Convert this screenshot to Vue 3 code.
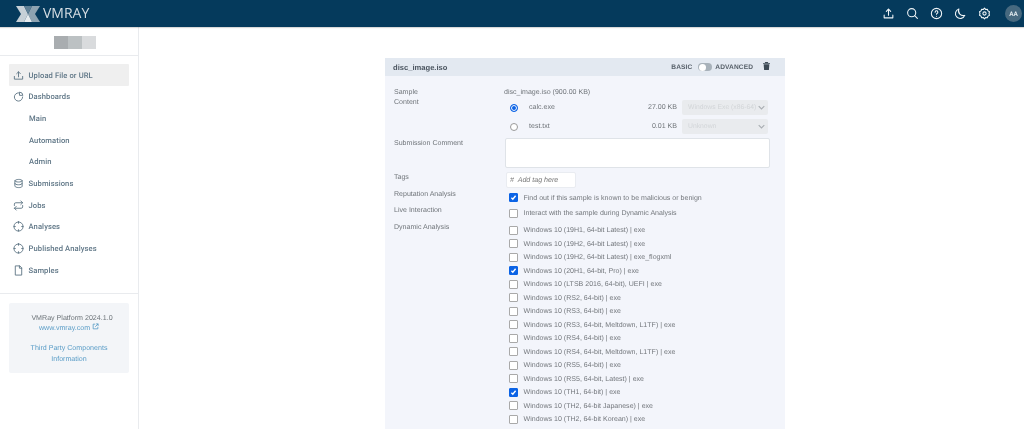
<template>
  <div class="app">
    <header class="topbar">
      <div class="logo">
        <svg width="24" height="16" viewBox="0 0 24 16">
          <path d="M0 0h8l4 8-4 8H0l5-8z" fill="#c6d0d7" />
          <path d="M24 0h-8l-4 8 4 8h8l-5-8z" fill="#8ea3b1" />
          <path d="M8 0h8l-4 8z" fill="#5f8096" />
          <path d="M8 16h8l-4-8z" fill="#e6ebee" />
        </svg>
        <span class="logo-text">VMRAY</span>
      </div>
      <div class="top-icons">
        <svg v-for="i in topIcons" :key="i.name" width="13" height="13" viewBox="0 0 24 24" fill="none" stroke="#eef3f6" stroke-width="2" stroke-linecap="round" stroke-linejoin="round">
          <path v-for="d in i.paths" :key="d" :d="d" />
        </svg>
        <span class="avatar">AA</span>
      </div>
    </header>

    <div class="body">
      <aside class="sidebar">
        <div class="org">
          <span class="swatch s1"></span><span class="swatch s2"></span><span class="swatch s3"></span>
        </div>
        <nav class="nav">
          <a v-for="item in nav" :key="item.label" class="nav-item" :class="{ active: item.active, sub: item.sub }">
            <svg v-if="item.paths" width="11" height="11" viewBox="0 0 24 24" fill="none" stroke="#5f7686" stroke-width="2" stroke-linecap="round" stroke-linejoin="round">
              <path v-for="d in item.paths" :key="d" :d="d" />
            </svg>
            <span>{{ item.label }}</span>
          </a>
        </nav>
        <div class="about-wrap">
          <div class="about">
            <div class="version">VMRay Platform 2024.1.0</div>
            <div class="link site">
              www.vmray.com
              <svg width="7" height="7" viewBox="0 0 24 24" fill="none" stroke="#4f97c4" stroke-width="2.6">
                <path d="M20 13v7H4V4h7M14 3h7v7M21 3l-10 10" />
              </svg>
            </div>
            <div class="link third">Third Party Components<br />Information</div>
          </div>
        </div>
      </aside>

      <main class="main">
        <section class="panel">
          <div class="panel-head">
            <span class="file-title">disc_image.iso</span>
            <div class="mode">
              <span>BASIC</span>
              <span class="toggle"><span class="knob"></span></span>
              <span>ADVANCED</span>
              <svg class="trash" width="7" height="8" viewBox="0 0 16 18">
                <path d="M5 0h6l1 2h4v2H0V2h4zM1.500 5h13l-1 13h-11z" fill="#3d4a55" />
              </svg>
            </div>
          </div>

          <div class="form">
            <div class="row sample">
              <div class="label">Sample<br />Content</div>
              <div class="field">
                <div class="filename">disc_image.iso (900.00 KB)</div>
                <div v-for="f in files" :key="f.name" class="file-row">
                  <span class="radio" :class="{ on: f.on }"></span>
                  <span class="file-name">{{ f.name }}</span>
                  <span class="file-size">{{ f.size }}</span>
                  <span class="select">
                    <span class="select-text">{{ f.type }}</span>
                    <svg width="7" height="5" viewBox="0 0 10 6" fill="none" stroke="#a9aeb3" stroke-width="1.600"><path d="M1 1l4 4 4-4" /></svg>
                  </span>
                </div>
              </div>
            </div>

            <div class="row comment">
              <div class="label">Submission Comment</div>
              <div class="field"><div class="textarea"></div></div>
            </div>

            <div class="row tags">
              <div class="label">Tags</div>
              <div class="field"><div class="tag-input"><span class="hash">#</span> Add tag here</div></div>
            </div>

            <div class="row single">
              <div class="label">Reputation Analysis</div>
              <div class="field">
                <label class="check"><span class="box on"><svg width="7" height="7" viewBox="0 0 10 10" fill="none" stroke="#fff" stroke-width="2"><path d="M2 5.500l2 2 4-5" /></svg></span><span class="check-text">Find out if this sample is known to be malicious or benign</span></label>
              </div>
            </div>

            <div class="row single">
              <div class="label">Live Interaction</div>
              <div class="field">
                <label class="check"><span class="box"></span><span class="check-text">Interact with the sample during Dynamic Analysis</span></label>
              </div>
            </div>

            <div class="row dynamic">
              <div class="label">Dynamic Analysis</div>
              <div class="field vm-list">
                <label v-for="vm in vms" :key="vm.name" class="check">
                  <span class="box" :class="{ on: vm.on }">
                    <svg v-if="vm.on" width="7" height="7" viewBox="0 0 10 10" fill="none" stroke="#fff" stroke-width="2"><path d="M2 5.500l2 2 4-5" /></svg>
                  </span>
                  <span class="check-text">{{ vm.name }}</span>
                </label>
              </div>
            </div>
          </div>
        </section>
      </main>
    </div>
  </div>
</template>

<script setup>
const topIcons = [
  { name: 'upload', paths: ['M12 15V4', 'M8 8l4-4 4 4', 'M4 15v5h16v-5'] },
  { name: 'search', paths: ['M10.500 3a7.500 7.500 0 1 0 0 15 7.500 7.500 0 0 0 0-15z', 'M16 16l5 5'] },
  { name: 'help', paths: ['M12 2.500a9.500 9.500 0 1 0 0 19 9.500 9.500 0 0 0 0-19z', 'M9.500 9.500a2.500 2.500 0 1 1 3.500 2.300c-.7.4-1 .9-1 1.700', 'M12 17v.01'] },
  { name: 'moon', paths: ['M20 15.500A9 9 0 0 1 9 3.500a9 9 0 1 0 11 12z'] },
  { name: 'settings', paths: ['M12 9a3 3 0 1 0 0 6 3 3 0 0 0 0-6z', 'M12 2l2 2.500 3.200-.4 1.200 3 2.800 1.600-.8 3.300.8 3.300-2.800 1.600-1.200 3-3.200-.4L12 22l-2-2.500-3.200.4-1.200-3-2.800-1.600.8-3.300-.8-3.300 2.800-1.600 1.200-3 3.200.4z'] },
]

const target = ['M12 2a10 10 0 1 0 0 20 10 10 0 0 0 0-20z', 'M12 2v3', 'M12 19v3', 'M2 12h3', 'M19 12h3']

const nav = [
  { label: 'Upload File or URL', active: true, paths: ['M12 15V4', 'M8 8l4-4 4 4', 'M3 14v6h18v-6'] },
  { label: 'Dashboards', paths: ['M12 4a9 9 0 1 0 9 9', 'M15 2.500a7 7 0 0 1 6.500 7H15z'] },
  { label: 'Main', sub: true },
  { label: 'Automation', sub: true },
  { label: 'Admin', sub: true },
  { label: 'Submissions', paths: ['M4 6c0-4 16-4 16 0v12c0 4-16 4-16 0z', 'M4 6c0 4 16 4 16 0', 'M4 12c0 4 16 4 16 0'] },
  { label: 'Jobs', paths: ['M17 2l4 4-4 4', 'M3 12V9a3 3 0 0 1 3-3h15', 'M7 22l-4-4 4-4', 'M21 12v3a3 3 0 0 1-3 3H3'] },
  { label: 'Analyses', paths: target },
  { label: 'Published Analyses', paths: target },
  { label: 'Samples', paths: ['M14 2H5v20h14V7z', 'M14 2v5h5'] },
]

const files = [
  { name: 'calc.exe', size: '27.00 KB', type: 'Windows Exe (x86-64)', on: true },
  { name: 'test.txt', size: '0.01 KB', type: 'Unknown', on: false },
]

const vms = [
  { name: 'Windows 10 (19H1, 64-bit Latest) | exe' },
  { name: 'Windows 10 (19H2, 64-bit Latest) | exe' },
  { name: 'Windows 10 (19H2, 64-bit Latest) | exe_flogxml' },
  { name: 'Windows 10 (20H1, 64-bit, Pro) | exe', on: true },
  { name: 'Windows 10 (LTSB 2016, 64-bit), UEFI | exe' },
  { name: 'Windows 10 (RS2, 64-bit) | exe' },
  { name: 'Windows 10 (RS3, 64-bit) | exe' },
  { name: 'Windows 10 (RS3, 64-bit, Meltdown, L1TF) | exe' },
  { name: 'Windows 10 (RS4, 64-bit) | exe' },
  { name: 'Windows 10 (RS4, 64-bit, Meltdown, L1TF) | exe' },
  { name: 'Windows 10 (RS5, 64-bit) | exe' },
  { name: 'Windows 10 (RS5, 64-bit, Latest) | exe' },
  { name: 'Windows 10 (TH1, 64-bit) | exe', on: true },
  { name: 'Windows 10 (TH2, 64-bit Japanese) | exe' },
  { name: 'Windows 10 (TH2, 64-bit Korean) | exe' },
]
</script>

<style>
html, body {
  margin: 0;
  background: #fff;
}
</style>

<style scoped>
.app {
  width: 1024px;
  height: 429px;
  overflow: hidden;
  display: flex;
  flex-direction: column;
  font-family: "Liberation Sans", Arial, sans-serif;
  text-rendering: geometricPrecision;
  background: #fff;
  /* the reference is a soft, downscaled capture */
  filter: blur(0.35px);
}

/* top bar */
.topbar {
  height: 27px;
  flex: none;
  background: #053a5c;
  display: flex;
  align-items: center;
  justify-content: space-between;
  box-shadow: 0 1px 1px rgba(0, 0, 0, 0.15);
  z-index: 1;
}

.logo {
  display: flex;
  align-items: center;
  margin-left: 16px;
  gap: 3px;
}

.logo-text {
  font-family: "Open Sans", sans-serif;
  font-size: 14px;
  color: #d5dde3;
}

.top-icons {
  display: flex;
  align-items: center;
  gap: 11px;
  margin-right: 2px;
}

.avatar {
  width: 17px;
  height: 17px;
  margin-left: 3px;
  border-radius: 50%;
  background: #47697f;
  color: #dfe7ec;
  font: 700 6.500px "Roboto", sans-serif;
  display: flex;
  align-items: center;
  justify-content: center;
}

.body {
  flex: 1;
  display: flex;
  min-height: 0;
}

/* sidebar */
.sidebar {
  width: 139px;
  box-sizing: border-box;
  flex: none;
  border-right: 1px solid #e9ebee;
  display: flex;
  flex-direction: column;
  font-family: Roboto, sans-serif;
}

.org {
  height: 29px;
  flex: none;
  border-bottom: 1px solid #e9ebee;
  display: flex;
  align-items: center;
  justify-content: center;
  padding: 2px 0 0 11px;
  box-sizing: border-box;
}

.swatch {
  width: 14px;
  height: 13px;
}

.s1 { background: #a9adb0; }
.s2 { background: #bcc1c3; }
.s3 { background: #d9dbdd; }

.nav {
  padding: 8px 9px 0;
  height: 238px;
  box-sizing: border-box;
  flex: none;
  border-bottom: 1px solid #e9ebee;
}

.nav-item {
  height: 21.670px;
  box-sizing: border-box;
  padding-top: 1px;
  display: flex;
  align-items: center;
  gap: 4.500px;
  padding-left: 4px;
  font-size: 7.600px;
  font-weight: 500;
  letter-spacing: 0.1px;
  color: #5f7686;
}

.nav-item.active {
  background: #efefef;
  border-radius: 1px;
}

.nav-item.sub {
  padding-left: 20px;
}

.about-wrap {
  padding: 9px;
}

.about {
  height: 70px;
  box-sizing: border-box;
  background: #f3f5f8;
  border-radius: 2px;
  text-align: center;
  padding-top: 10px;
  font-family: "Liberation Sans", sans-serif;
  font-size: 7.100px;
  line-height: 10px;
}

.version {
  color: #6d7479;
  padding-left: 6px;
}

.link {
  color: #5a9dc7;
}

.third {
  margin-top: 10px;
  line-height: 10.500px;
}

/* form panel */
.main {
  flex: 1;
  min-width: 0;
  display: flex;
  justify-content: center;
  padding-top: 31px;
  padding-left: 7px;
}

.panel {
  width: 400px;
  flex: none;
  background: #f3f5fb;
  font-size: 7.050px;
  color: #70757a;
}

.panel-head {
  height: 18px;
  background: #e3e9f1;
  display: flex;
  align-items: center;
  justify-content: space-between;
  padding: 0 15px 0 8px;
}

.file-title {
  font-weight: 700;
  font-size: 7.600px;
  color: #4b5560;
}

.mode {
  display: flex;
  align-items: center;
  font-size: 6.600px;
  font-weight: 700;
  letter-spacing: 0.1px;
  color: #565f68;
}

.toggle {
  width: 14px;
  height: 8px;
  margin: 0 3px 0 6px;
  border-radius: 4px;
  background: #a8b2ba;
  display: flex;
  align-items: center;
}

.knob {
  width: 7px;
  height: 7px;
  margin-left: 0.500px;
  border-radius: 50%;
  background: #fff;
}

.trash {
  margin-left: 10px;
  margin-top: -3px;
}

.form {
  padding-top: 10px;
}

.row {
  display: grid;
  grid-template-columns: 110px 1fr;
  padding-left: 9px;
}

.label {
  line-height: 10px;
}

.sample {
  height: 52px;
}

.sample .label {
  line-height: 10.500px;
  padding-top: 1.500px;
}

.filename {
  padding: 1.500px 0 0.500px;
  line-height: 10px;
}

.file-row {
  height: 19px;
  display: flex;
  align-items: center;
  margin-left: 6px;
  width: 258px;
}

.radio {
  width: 6px;
  height: 6px;
  border: 1px solid #9a9a9a;
  border-radius: 50%;
  background: #fff;
  flex: none;
}

.radio.on {
  border-color: #0b63e5;
  box-shadow: inset 0 0 0 1px #fff;
  background: #0b63e5;
}

.file-name {
  margin-left: 11px;
  flex: 1;
}

.file-size {
  margin-right: 5px;
}

.select {
  width: 86px;
  height: 15px;
  box-sizing: border-box;
  background: #e9ebee;
  border-radius: 2px;
  display: flex;
  align-items: center;
  justify-content: space-between;
  padding: 0 3px 0 6px;
  color: #d2d5d8;
  white-space: nowrap;
}

.select-text {
  width: 70px;
  font-size: 6.800px;
}

.comment {
  height: 34px;
}

.comment .label {
  padding-top: 1px;
}

.textarea {
  width: 263px;
  height: 28px;
  margin-left: 1px;
  background: #fff;
  border: 1px solid #dfe3e8;
  border-radius: 2px;
}

.tags {
  height: 19px;
}

.tags .label {
  padding-top: 0.500px;
}

.tag-input {
  width: 70px;
  height: 16px;
  box-sizing: border-box;
  margin-left: 2px;
  background: #fff;
  border: 1px solid #e9ecf1;
  border-radius: 2px;
  font-size: 7.100px;
  font-style: italic;
  line-height: 14px;
  padding-left: 3px;
  color: #777;
}

.hash {
  margin-right: 2px;
}

.single {
  height: 15.500px;
}

.single .label {
  line-height: 7px;
}

.check {
  height: 13.500px;
  display: flex;
  align-items: center;
  margin-left: 5px;
  white-space: nowrap;
  color: #74787d;
}

.check-text {
  padding-top: 1px;
}

.box {
  width: 7px;
  height: 7px;
  flex: none;
  margin-right: 5.500px;
  border: 1px solid #a9a9a9;
  border-radius: 1px;
  background: #fff;
  display: flex;
  align-items: center;
  justify-content: center;
}

.box.on {
  background: #0b63e5;
  border-color: #0b63e5;
}

.box svg {
  flex: none;
}

.dynamic {
  padding-top: 1.500px;
}

.dynamic .label {
  line-height: 8px;
}
</style>
